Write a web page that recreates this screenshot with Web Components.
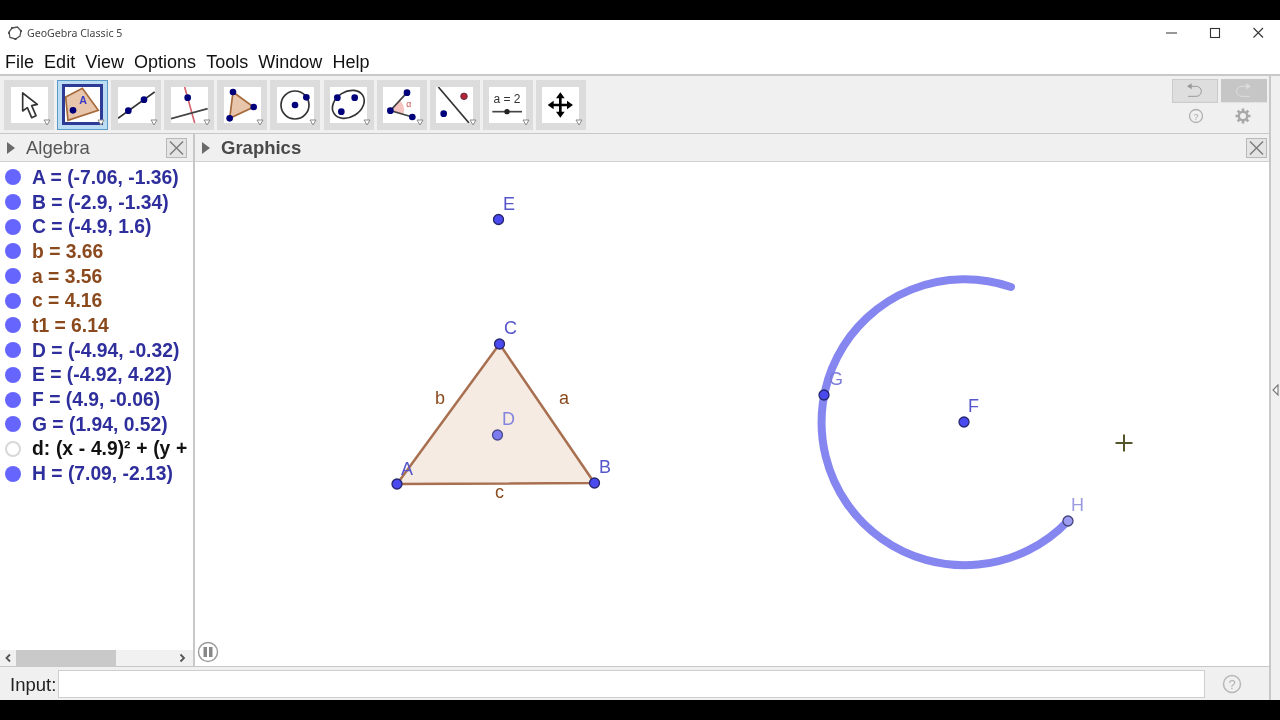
<!DOCTYPE html>
<html lang="en">
<head>
<meta charset="utf-8">
<title>GeoGebra Classic 5</title>
<style>
html,body{margin:0;padding:0;background:#000;height:720px;overflow:hidden;font-family:"Liberation Sans",Arial,sans-serif}
</style>
</head>
<body>
<ggb-app>
  <ggb-titlebar>GeoGebra Classic 5</ggb-titlebar>
  <ggb-menubar>
    <span>File</span><span>Edit</span><span>View</span><span>Options</span><span>Tools</span><span>Window</span><span>Help</span>
  </ggb-menubar>
  <ggb-workspace>
    <ggb-toolbar>
      <ggb-tool><svg viewBox="33 200 111 108"><path d="M68 218V272L82 262 95 292 108 286 95 256 112 252Z" fill="#fff" stroke="#333" stroke-width="5" stroke-linejoin="round"/></svg></ggb-tool>
      <ggb-tool selected><svg viewBox="196 202 105 105"><path d="M198 232L248 206 296 272 205 302Z" fill="#e8c6ab" stroke="#a5693a" stroke-width="5"/><circle cx="220" cy="272" r="10" fill="#00007a"/><text x="250" y="254" text-anchor="middle" font-size="32" font-weight="700" fill="#3a3ac4" font-family="Liberation Sans">A</text></svg></ggb-tool>
      <ggb-tool><svg viewBox="352 200 111 108"><path d="M352 294L462 215" stroke="#333" stroke-width="5"/><circle cx="383" cy="271" r="10" fill="#00007a"/><circle cx="430" cy="238" r="10" fill="#00007a"/></svg></ggb-tool>
      <ggb-tool><svg viewBox="512 200 111 108"><path d="M553 200L583 308" stroke="#d4646e" stroke-width="5"/><path d="M512 295L622 265" stroke="#444" stroke-width="5"/><circle cx="562" cy="232" r="10" fill="#00007a"/></svg></ggb-tool>
      <ggb-tool><svg viewBox="671 200 111 108"><path d="M698 215L760 260 688 294Z" fill="#e8c6ab" stroke="#a5693a" stroke-width="5"/><circle cx="698" cy="215" r="10" fill="#00007a"/><circle cx="760" cy="260" r="10" fill="#00007a"/><circle cx="688" cy="294" r="10" fill="#00007a"/></svg></ggb-tool>
      <ggb-tool><svg viewBox="830 200 111 108"><circle cx="884" cy="254" r="42" fill="none" stroke="#333" stroke-width="5"/><circle cx="884" cy="254" r="10" fill="#00007a"/><circle cx="918" cy="231" r="10" fill="#00007a"/></svg></ggb-tool>
      <ggb-tool><svg viewBox="30 36 111 108"><ellipse cx="85" cy="88" rx="51" ry="38" transform="rotate(-32 85 88)" fill="none" stroke="#333" stroke-width="5"/><circle cx="52" cy="68" r="10" fill="#00007a"/><circle cx="104" cy="68" r="10" fill="#00007a"/><circle cx="64" cy="110" r="10" fill="#00007a"/></svg></ggb-tool>
      <ggb-tool><svg viewBox="188 36 111 108"><path d="M210 107L238 76A42 42 0 0 1 250 117Z" fill="#f6c4c0"/><path d="M260 53L210 107 276 126" fill="none" stroke="#444" stroke-width="5"/><circle cx="260" cy="53" r="10" fill="#00007a"/><circle cx="210" cy="107" r="10" fill="#00007a"/><circle cx="276" cy="126" r="10" fill="#00007a"/><text x="265" y="97" text-anchor="middle" font-size="26" fill="#c8504c" font-family="Liberation Sans">α</text></svg></ggb-tool>
      <ggb-tool><svg viewBox="348 36 111 108"><path d="M355 36L447 144" stroke="#333" stroke-width="5"/><circle cx="371" cy="116" r="10" fill="#00007a"/><circle cx="432" cy="64" r="10" fill="#b02434" stroke="#40204a" stroke-width="2"/></svg></ggb-tool>
      <ggb-tool><svg viewBox="508 36 111 108"><text x="562" y="85" text-anchor="middle" font-size="36" fill="#333" font-family="Liberation Sans">a = 2</text><path d="M518 110H607" stroke="#444" stroke-width="5"/><circle cx="562" cy="110" r="8" fill="#222"/></svg></ggb-tool>
      <ggb-tool><svg viewBox="667 36 111 108"><path d="M722 52L735 70H726V86H742V77L760 90 742 103V94H726V110H735L722 128 709 110H718V94H702V103L684 90 702 77V86H718V70H709Z" fill="#000"/></svg></ggb-tool>
      <ggb-history></ggb-history>
    </ggb-toolbar>
    <ggb-panels>
      <ggb-algebra>
        <ggb-row kind="pt">A = (-7.06, -1.36)</ggb-row>
        <ggb-row kind="pt">B = (-2.9, -1.34)</ggb-row>
        <ggb-row kind="pt">C = (-4.9, 1.6)</ggb-row>
        <ggb-row kind="num">b = 3.66</ggb-row>
        <ggb-row kind="num">a = 3.56</ggb-row>
        <ggb-row kind="num">c = 4.16</ggb-row>
        <ggb-row kind="num">t1 = 6.14</ggb-row>
        <ggb-row kind="pt">D = (-4.94, -0.32)</ggb-row>
        <ggb-row kind="pt">E = (-4.92, 4.22)</ggb-row>
        <ggb-row kind="pt">F = (4.9, -0.06)</ggb-row>
        <ggb-row kind="pt">G = (1.94, 0.52)</ggb-row>
        <ggb-row kind="conic" hidden-obj>d: (x - 4.9)² + (y +</ggb-row>
        <ggb-row kind="pt">H = (7.09, -2.13)</ggb-row>
      </ggb-algebra>
      <ggb-graphics></ggb-graphics>
    </ggb-panels>
    <ggb-inputbar></ggb-inputbar>
  </ggb-workspace>
</ggb-app>
<script>
function def(name, css, html){
  customElements.define(name, class extends HTMLElement{
    constructor(){
      super();
      const r=this.attachShadow({mode:'open'});
      r.innerHTML='<style>'+css+'</style>'+html;
    }
  });
}
const SANS='"Liberation Sans",Arial,sans-serif';

def('ggb-app',
 ':host{display:flex;flex-direction:column;width:1280px;height:680px;margin:20px 0;background:#fff;filter:blur(.3px)}',
 '<slot></slot>');

def('ggb-titlebar',
 ':host{display:flex;align-items:center;height:24px;flex:none;background:#fff;color:#444;font:10.6px "Noto Sans","Open Sans",sans-serif}'+
 '.ic{margin-left:8px;margin-right:5px;flex:none;position:relative;top:1px}.t{flex:1;padding-top:2px}'+
 '.w{display:flex;height:24px;align-items:center}.w svg{display:block}',
 '<svg class="ic" width="14" height="14" viewBox="0 0 14 14"><path d="M4 2L9.5 1 13 5 12 10 7.5 13 2 11.5 1 6Z" fill="#fff" stroke="#555" stroke-width="1.3"/><g fill="#444"><circle cx="4" cy="2" r="1.1"/><circle cx="13" cy="5" r="1.1"/><circle cx="7.5" cy="13" r="1.1"/><circle cx="1" cy="7" r="1.1"/></g></svg>'+
 '<span class="t"><slot></slot></span>'+
 '<div class="w"><svg width="150" height="24" viewBox="1130 20 150 24"><path d="M1166 33H1177" stroke="#444" stroke-width="1.1"/><rect x="1210.5" y="28.5" width="9" height="9" fill="none" stroke="#333" stroke-width="1.1"/><path d="M1253.5 28L1263 37.5M1263 28L1253.5 37.5" stroke="#333" stroke-width="1.1"/></svg></div>');

def('ggb-menubar',
 ':host{display:flex;align-items:center;gap:10.1px;height:32px;box-sizing:border-box;flex:none;padding:6px 0 0 5px;background:#fff;color:#111;font:18px '+SANS+';border-bottom:2px solid #c8c8c8}',
 '<slot></slot>');

def('ggb-workspace',
 ':host{display:flex;flex-direction:column;flex:1;min-height:0;width:1271px;box-sizing:border-box;border-right:2px solid #c8c8c8;box-shadow:9px 0 0 #f0f0f0;position:relative}'+
 '.t{position:absolute;left:1272px;top:308px}',
 '<slot></slot><svg class="t" width="7" height="12" viewBox="0 0 7 12"><path d="M6 1L1 6 6 11Z" fill="#fff" stroke="#777" stroke-width="1.1"/></svg>');

def('ggb-toolbar',
 ':host{display:flex;align-items:center;gap:3.1px;height:57px;flex:none;padding:0 2px 0 4px;background:#f0f0f0;border-bottom:1px solid #c8c8c8}',
 '<slot></slot>');

def('ggb-tool',
 ':host{display:flex;align-items:center;justify-content:center;width:50px;height:50px;flex:none;box-sizing:border-box;background:#dcdcdc;position:relative}'+
 ':host([selected]){width:51px;background:#bcdcf4;box-shadow:inset 0 0 0 1px #5a9ac8}'+
 '.box{width:37px;height:36px;background:#fff;display:flex}'+
 ':host([selected]) .box{width:41px;height:41px;box-sizing:border-box;border:3px solid #2d3a96}'+
 '::slotted(svg){width:100%;height:100%;display:block}'+
 '.dd{position:absolute;right:3px;bottom:4px}',
 '<div class="box"><slot></slot></div><svg class="dd" width="8" height="7" viewBox="0 0 8 7"><path d="M1 1H7L4 6Z" fill="#fff" stroke="#8a8a8a"/></svg>');

def('ggb-history',
 ':host{display:flex;flex-direction:column;align-items:center;margin-left:auto;width:95px;gap:4px;align-self:flex-start;margin-top:3px}'+
 '.r{display:flex;justify-content:space-between;width:95px}.r svg{display:block}'+
 '.b{display:flex;justify-content:space-around;width:95px}.b svg{display:block}',
 '<div class="r"><svg width="46" height="24" viewBox="127 175 138 72"><rect x="128" y="176" width="136" height="69" fill="#dedede" stroke="#c6c6c6" stroke-width="3"/><path d="M172 197L186 188V206Z" fill="#999"/><path d="M184 197H200A15 15 0 0 1 200 227H175" fill="none" stroke="#999" stroke-width="3"/></svg>'+
 '<svg width="46" height="24" viewBox="272 175 138 72"><rect x="272" y="175" width="138" height="70" fill="#c6c6c6"/><path d="M362 197L348 188V206Z" fill="#dedede"/><path d="M350 197H334A15 15 0 0 0 334 227H358" fill="none" stroke="#dedede" stroke-width="3"/></svg></div>'+
 '<div class="b"><svg width="18" height="18" viewBox="0 0 18 18"><circle cx="9" cy="9" r="6.5" fill="none" stroke="#b0b0b0" stroke-width="1.3"/><text x="9" y="12.5" text-anchor="middle" font-size="9" fill="#a8a8a8" font-family="Liberation Sans">?</text></svg>'+
 '<svg width="18" height="18" viewBox="0 0 18 18"><circle cx="9" cy="9" r="4.2" fill="none" stroke="#a8a8a8" stroke-width="2.4"/><path d="M9 1.5V4M9 14V16.5M1.5 9H4M14 9H16.5M3.7 3.7L5.5 5.5M12.5 12.5L14.3 14.3M14.3 3.7L12.5 5.5M5.500 12.5L3.7 14.3" stroke="#a8a8a8" stroke-width="2.6"/></svg></div>');

def('ggb-panels',
 ':host{display:flex;flex:1;min-height:0;border-bottom:1px solid #c8c8c8}',
 '<slot></slot>');

def('ggb-panel-head',
 ':host{display:flex;align-items:center;height:27px;flex:none;background:#f0f0f0;color:#555;border-bottom:1px solid #d0d0d0;font:18.5px '+SANS+';padding:0 2px 0 7px}'+
 ':host([strong]){font-weight:700;color:#4a4a4a}'+
 ':host([narrow]){padding-right:6px}'+
 '.a{display:block;margin-right:11px;flex:none}.t{flex:1;padding-top:1px}svg.c{display:block;flex:none}',
 '<svg class="a" width="8" height="14" viewBox="0 0 8 14"><path d="M0 1L8 7 0 13Z" fill="#6a6a6a"/></svg><span class="t"><slot></slot></span><svg class="c" width="21" height="20" viewBox="0 0 21 20"><rect x=".5" y=".5" width="20" height="19" fill="#e4e4e4" stroke="#b8b8b8"/><path d="M4 3.5L17 16.5M17 3.5L4 16.5" stroke="#777" stroke-width="1.3"/></svg>');

def('ggb-algebra',
 ':host{display:flex;flex-direction:column;width:193px;flex:none;border-right:2px solid #c8c8c8;background:#fff}'+
 '.list{flex:1;min-height:0;overflow:hidden;padding-top:3px}'+
 '.sb{display:flex;align-items:center;height:16px;flex:none;background:#f1f1f1}'+
 '.sb svg{display:block;flex:none}.th{width:100px;height:16px;background:#c9c9c9;flex:none}.sp{flex:1}',
 '<ggb-panel-head narrow>Algebra</ggb-panel-head><div class="list"><slot></slot></div>'+
 '<div class="sb"><svg width="16" height="16" viewBox="0 0 16 16"><path d="M10 4.5L6.5 8 10 11.5" fill="none" stroke="#555" stroke-width="1.8"/></svg><div class="th"></div><div class="sp"></div><svg width="21" height="16" viewBox="0 0 21 16"><path d="M8.5 4.5L12 8 8.5 11.5" fill="none" stroke="#555" stroke-width="1.8"/></svg></div>');

def('ggb-row',
 ':host{display:flex;align-items:center;height:24.7px;white-space:nowrap;font:700 19.3px '+SANS+';color:#2e2e9c}'+
 ':host([kind=num]){color:#8b4a1e}:host([kind=conic]){color:#111;word-spacing:.35px}'+
 '.t{padding-top:1px}'+
 '.b{width:16px;height:16px;border-radius:50%;background:#6666ff;margin:0 11px 0 5px;flex:none}'+
 ':host([hidden-obj]) .b{background:#fff;box-sizing:border-box;border:2px solid #d8d8d8}',
 '<span class="b"></span><span class="t"><slot></slot></span>');

def('ggb-graphics',
 ':host{display:flex;flex-direction:column;flex:1;min-width:0;background:#fff}'+
 'svg.cv{display:block;flex:1;min-height:0;width:100%;font-family:'+SANS+';font-size:18px}',
 '<ggb-panel-head strong>Graphics</ggb-panel-head>'+
 '<svg class="cv" viewBox="195 162 1074 504" preserveAspectRatio="xMinYMin">'+
 '<path d="M397 484L499.5 344 594.5 483Z" fill="#f5ebe3" stroke="#a87050" stroke-width="2.5" stroke-linejoin="round"/>'+
 '<path d="M1011 287A143 143 0 1 0 1068 521" fill="none" stroke="#8686f0" stroke-width="8" stroke-linecap="round"/>'+
 '<g stroke="#26266e" stroke-width="1.3" fill="#4a4aee">'+
 '<circle cx="498.5" cy="219.5" r="5"/><circle cx="499.5" cy="344" r="5"/><circle cx="397" cy="484" r="5"/><circle cx="594.5" cy="483" r="5"/><circle cx="964" cy="422" r="5"/><circle cx="824" cy="395" r="5"/>'+
 '<circle cx="497.5" cy="435" r="5" fill="#7c7cf0" stroke="#4a4a90"/><circle cx="1068" cy="521" r="5" fill="#9c9cf0" stroke="#44447a"/></g>'+
 '<g fill="#5555cc"><text x="503" y="210">E</text><text x="504" y="334">C</text><text x="401" y="475">A</text><text x="599" y="473">B</text><text x="968" y="412">F</text></g>'+
 '<text x="502" y="425" fill="#8484dc">D</text><text x="829" y="385" fill="#7c7cd8">G</text><text x="1071" y="511" fill="#9a9ae0">H</text>'+
 '<g fill="#8b4a1e"><text x="435" y="404">b</text><text x="559" y="404">a</text><text x="495" y="498">c</text></g>'+
 '<path d="M1115.5 443H1132.5M1124 434.5V451.5" stroke="#55552a" stroke-width="2"/>'+
 '<circle cx="208" cy="652" r="9.5" fill="#fff" stroke="#9a9a9a" stroke-width="1.4"/><rect x="203.5" y="647" width="3.5" height="10" fill="#888"/><rect x="209" y="647" width="3.5" height="10" fill="#888"/>'+
 '</svg>');

def('ggb-inputbar',
 ':host{display:flex;align-items:center;height:33px;flex:none;background:#f0f0f0;font:18.5px '+SANS+';color:#222;padding-left:10px}'+
 'label{width:48px;flex:none;padding-top:2px}input{width:1147px;height:28px;box-sizing:border-box;border:1px solid #cfcfcf;background:#fff;padding:0;margin:0;flex:none}'+
 'svg{display:block;margin-left:17px;flex:none}',
 '<label>Input:</label><input aria-label="Input"><svg width="20" height="20" viewBox="0 0 20 20"><circle cx="10" cy="10" r="8.5" fill="none" stroke="#b8b8b8" stroke-width="1.5"/><text x="10" y="14.5" text-anchor="middle" font-size="13" fill="#b0b0b0" font-family="Liberation Sans">?</text></svg>');
</script>
</body>
</html>
